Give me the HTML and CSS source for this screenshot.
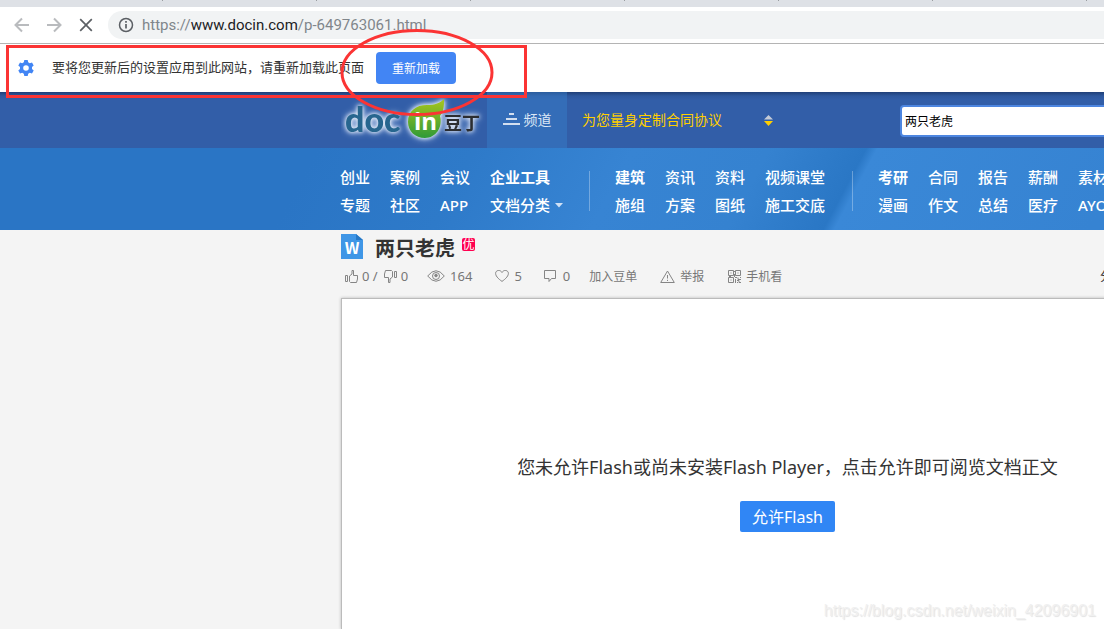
FILE: index.html
```html
<!DOCTYPE html>
<html lang="zh-CN">
<head>
<meta charset="utf-8">
<title>两只老虎</title>
<link rel="stylesheet" href="styles.css">
</head>
<body>
<div class="tabs"><i></i><i></i><i></i><i></i><i></i><i></i><i></i></div>
<div class="toolbar">
  <button class="tool" aria-label="后退"><svg width="16" height="16" viewBox="0 0 16 16" fill="none" stroke="#b9bbbe" stroke-width="2"><path d="M15 8H2M8 1.500L1.500 8L8 14.500"/></svg></button>
  <button class="tool" aria-label="前进"><svg width="16" height="16" viewBox="0 0 16 16" fill="none" stroke="#b9bbbe" stroke-width="2"><path d="M1 8H14M8 1.500L14.500 8L8 14.500"/></svg></button>
  <button class="tool" aria-label="停止"><svg width="16" height="16" viewBox="0 0 16 16" fill="none" stroke="#5b5f64" stroke-width="1.700"><path d="M2.200 2.200L13.800 13.800M13.800 2.200L2.200 13.800"/></svg></button>
  <div class="address">
    <svg width="16" height="16" viewBox="0 0 16 16" fill="none" stroke="#5b5f64"><circle cx="8" cy="8" r="6.500" stroke-width="1.500"/><path d="M8 7V11.500M8 4V5.700" stroke-width="1.700"/></svg>
    <span class="url">https://<b>www.docin.com</b>/p-649763061.html</span>
  </div>
</div>
<div class="infobar">
  <svg width="18" height="18" viewBox="0 0 18 18"><path fill="#4285f4" fill-rule="evenodd" d="M7.300 1H10.700L11.200 3.300L12.800 4.200L15 3.500L16.700 6.400L15 8V10L16.700 11.600L15 14.500L12.800 13.800L11.200 14.700L10.700 17H7.300L6.800 14.700L5.200 13.800L3 14.500L1.300 11.600L3 10V8L1.300 6.400L3 3.500L5.200 4.200L6.800 3.300ZM9 6.200A2.800 2.800 0 1 0 9 11.800A2.800 2.800 0 1 0 9 6.200Z"/></svg>
  <span class="message">要将您更新后的设置应用到此网站，请重新加载此页面</span>
  <button class="reload">重新加载</button>
</div>
<header class="header">
  <a class="logo" href="#" aria-label="豆丁">
    <svg width="146" height="56" viewBox="0 0 146 56">
      <defs>
        <linearGradient id="leaf" x1="0" y1="0" x2="0" y2="1"><stop offset="0" stop-color="#a9c61d"/><stop offset="1" stop-color="#2f9a38"/></linearGradient>
      </defs>
      <g class="glow">
        <text class="doc" x="4" y="40">doc</text>
        <path fill="url(#leaf)" d="M103 7C103 14 103 19 99 24C102 35 95 46 84 46C74 46 67 39 67 30C67 19 75 13 86 13C94 13 99 11 103 7Z"/>
        <text class="cn" x="103" y="38">豆丁</text>
      </g>
      <text class="in" x="73" y="38">in</text>
    </svg>
  </a>
  <a class="channel" href="#"><svg width="17" height="12" viewBox="0 0 17 12" fill="#d3dff0"><path d="M6 0h5v2H6zM3 5h11v2H3zM0 10h17v2H0z"/></svg>频道</a>
  <a class="promo" href="#">为您量身定制合同协议</a>
  <button class="sorter" aria-label="切换"><svg width="9" height="11" viewBox="0 0 9 11"><path fill="#c5cbd6" d="M4.500 0L9 4.500H0Z"/><path fill="#ffcf00" d="M0 6H9L4.500 11Z"/></svg></button>
  <input class="search" type="text" value="两只老虎" aria-label="搜索">
</header>
<nav class="nav">
  <div class="group">
    <a href="#">创业</a><a href="#">案例</a><a href="#">会议</a><a href="#" class="strong wide">企业工具</a>
    <a href="#">专题</a><a href="#">社区</a><a href="#">APP</a><a href="#" class="wide">文档分类<svg width="8" height="5" viewBox="0 0 8 5"><path fill="#d0e1f5" d="M0 0H8L4 4.500Z"/></svg></a>
  </div>
  <div class="group">
    <a href="#" class="strong">建筑</a><a href="#">资讯</a><a href="#">资料</a><a href="#">视频课堂</a>
    <a href="#">施组</a><a href="#">方案</a><a href="#">图纸</a><a href="#">施工交底</a>
  </div>
  <div class="group five">
    <a href="#" class="strong">考研</a><a href="#">合同</a><a href="#">报告</a><a href="#">薪酬</a><a href="#">素材</a>
    <a href="#">漫画</a><a href="#">作文</a><a href="#">总结</a><a href="#">医疗</a><a href="#">AYO</a>
  </div>
</nav>
<main class="page">
  <div class="heading">
    <svg width="22" height="25" viewBox="0 0 22 25"><path fill="#3f96e6" d="M0 0H15L22 6V25H0Z"/><path fill="#2678c6" d="M15 0L22 6H15Z"/><text class="word" x="11" y="20" text-anchor="middle">W</text></svg>
    <h1>两只老虎</h1>
    <span class="badge">优</span>
  </div>
  <div class="stats">
    <button class="votes"><svg width="13" height="13" viewBox="0 0 13 13" fill="none" stroke="#858585"><path d="M.5 5.500H2.500V11.500H.5ZM4.500 11.500V6L7 4V.5H8.500V5.500H12.500V9L11.500 12.500H5.500Z"/></svg><span>0 /</span><svg class="down" width="13" height="13" viewBox="0 0 13 13" fill="none" stroke="#858585"><path d="M10.500 1.500H12.500V7.500H10.500ZM8.500 1.500V7L6 9V12.500H4.500V7.500H.5V4L1.500 .5H7.500Z"/></svg><span>0</span></button>
    <span class="stat views"><svg width="18" height="12" viewBox="0 0 18 12" fill="none" stroke="#858585"><path d="M.7 6Q9-4.500 17.300 6Q9 16.500 .7 6Z"/><circle cx="9" cy="6" r="3.500"/><circle cx="9" cy="5.500" r="1.300" fill="#858585"/></svg>164</span>
    <button class="stat likes"><svg width="14" height="12" viewBox="0 0 14 12" fill="none" stroke="#858585"><path d="M7 2.500C5.500-.2 2-.2 .8 2.200C-.3 5.500 3.500 9 7 11.400C10.500 9 14.300 5.500 13.200 2.200C12-.2 8.500-.2 7 2.500Z"/></svg>5</button>
    <button class="stat notes"><svg width="12" height="12" viewBox="0 0 12 12" fill="none" stroke="#858585"><path d="M.5 .5H11.500V8.500H7.500L5 11.500V8.500H.5Z"/></svg>0</button>
    <button class="stat save">加入豆单</button>
    <button class="stat report"><svg width="15" height="13" viewBox="0 0 15 13" fill="none" stroke="#858585"><path d="M7.500 1L14.300 12.500H.7ZM7.500 5V8.500M7.500 9.800V11"/></svg>举报</button>
    <button class="stat phone"><svg width="13" height="13" viewBox="0 0 13 13" fill="none" stroke="#858585"><path d="M.5 .5H5.500V5.500H.5ZM7.500 .5H12.500V5.500H7.500ZM.5 7.500H5.500V12.500H.5ZM2.500 3H3.500M9.500 3H10.500M2.500 10H3.500M7 7.500H9M10 7.500V9.500H13M7.500 9V13M9 10.500H11V12.500H13M9 12.500H10M12.500 7V8M6.500 1V2M6.500 4V7M1 6.500H3"/></svg>手机看</button>
    <button class="stat share">分享</button>
  </div>
  <section class="sheet">
    <p>您未允许Flash或尚未安装Flash Player，点击允许即可阅览文档正文</p>
    <button class="allow">允许Flash</button>
  </section>
</main>
<div class="watermark">https://blog.csdn.net/weixin_42096901</div>
<svg class="marks" width="540" height="120" viewBox="0 0 540 120" fill="none" stroke="#fb3434" stroke-width="3"><path d="M7.500 46.500H525.500V96.500H7.500Z"/><ellipse cx="417" cy="72.500" rx="75" ry="42"/></svg>
</body>
</html>
```
FILE: styles.css
```css
* { box-sizing: border-box; }
body {
  margin: 0;
  min-height: 100vh;
  display: flex;
  flex-direction: column;
  position: relative;
  overflow: hidden;
  background: #f4f4f4;
  font-family: "Noto Sans", "Noto Sans CJK SC", sans-serif;
  white-space: nowrap;
}
button {
  border: 0;
  padding: 0;
  background: none;
  font: inherit;
  color: inherit;
}
a { color: inherit; text-decoration: none; }
svg { flex: none; display: block; }
.tabs {
  height: 7px;
  background: #dee1e6;
  display: flex;
  gap: 153px;
  padding-left: 162px;
}
.tabs i { flex: none; width: 1px; height: 1px; background: #9a9da1; }
.toolbar {
  height: 37px;
  background: #fff;
  border-bottom: 1px solid #b4b4b4;
  display: flex;
  align-items: center;
  gap: 16px;
  padding-left: 14px;
}
.tool { flex: none; }
.address {
  flex: 1;
  height: 28px;
  margin-left: -2px;
  padding-left: 10px;
  border-radius: 14px 0 0 14px;
  background: #f1f3f4;
  display: flex;
  align-items: center;
  gap: 8px;
}
.url { font-size: 15px; font-family: Roboto, sans-serif; color: #80868b; }
.url b { font-weight: 400; color: #202124; }
.infobar {
  height: 48px;
  background: #fff;
  display: flex;
  align-items: center;
  padding-left: 17px;
}
.message { margin: 0 12px 0 17px; padding-bottom: 4px; font-size: 13px; color: #333; }
.reload {
  width: 80px;
  height: 32px;
  border-radius: 4px;
  background: #4285f4;
  color: #fff;
  font-size: 12px;
}
.header {
  height: 56px;
  min-width: 1234px;
  padding-left: 341px;
  background: linear-gradient(#203f78, #2e589e 4px, #325ea8 8px);
  display: flex;
  align-items: center;
}
.logo { flex: none; }
.glow { filter: drop-shadow(0 0 2px #fff) drop-shadow(0 0 3px #b5cbee); }
.doc { font: 900 34px Lato, sans-serif; fill: #27668f; }
.in { font: 700 24px "Open Sans", sans-serif; fill: #fff; }
.cn { font: 700 18px "Noto Sans CJK SC", sans-serif; fill: #2b2d31; }
.channel {
  width: 80px;
  height: 56px;
  padding-bottom: 2px;
  background: rgba(55, 129, 205, .45);
  color: #dce7f6;
  font-size: 14px;
  display: flex;
  align-items: center;
  justify-content: center;
  gap: 4px;
}
.promo { margin: 0 42px 0 15px; padding-bottom: 2px; color: #ffcf00; font-size: 14px; }
.search {
  flex: 1;
  height: 32px;
  margin: 1px 0 0 127px;
  padding: 0 3px;
  border: 2px solid #4d86e0;
  border-radius: 4px;
  background: #fff;
  color: #000;
  font: 12px "Noto Sans", "Noto Sans CJK SC", sans-serif;
}
.nav {
  min-width: 1234px;
  padding: 15px 0 11px 340px;
  background:
    linear-gradient(120deg, transparent 1000px, rgba(34, 110, 190, .4) 1000px),
    linear-gradient(118deg, #2a75c5 0, #2a75c5 280px, #2e7ac9 420px, #3784d3 560px, #3582d0 680px, #2a77c5 765px, #3a88d7 775px, #3683d2 1000px);
  color: #fff;
  font-size: 15px;
  font-weight: 500;
  line-height: 28px;
  display: flex;
  align-items: center;
}
.group {
  display: grid;
  grid-template-columns: repeat(3, 30px) auto;
  column-gap: 20px;
}
.group.five { grid-template-columns: repeat(5, 30px); }
.group + .group { margin-left: 25px; padding-left: 26px; background: linear-gradient(rgba(255, 255, 255, .3), rgba(255, 255, 255, .3)) left center / 1px 40px no-repeat; }
.group + .five { margin-left: 27px; }
.group .strong { font-weight: 700; }
.group .wide { width: 74px; display: flex; align-items: center; gap: 5px; }
.page {
  flex: 1;
  min-width: 1234px;
  padding-left: 341px;
  display: flex;
  flex-direction: column;
}
.heading {
  height: 34px;
  padding-top: 4px;
  display: flex;
  align-items: flex-start;
}
.word { font: 700 16px "Noto Sans CJK SC", sans-serif; fill: #fff; }
h1 {
  margin: 0 7px 0 12px;
  font-size: 20px;
  line-height: 29px;
  color: #333;
}
.badge {
  width: 13px;
  height: 13px;
  margin-top: 4px;
  border-radius: 2px;
  background: #ff0050;
  color: #fff;
  font-size: 12px;
  line-height: 13px;
  text-align: center;
}
.stats {
  height: 34px;
  padding: 0 84px 10px 4px;
  display: flex;
  align-items: center;
  color: #777;
  font-size: 13px;
}
.votes, .stat { display: flex; align-items: center; gap: 6px; }
.votes { gap: 4px; margin-right: 19px; }
.down { margin-left: 2px; }
.views { margin-right: 23px; gap: 5px; }
.likes { margin-right: 22px; gap: 5px; }
.notes { margin-right: 19px; gap: 7px; }
.save, .report, .phone, .share { font-size: 12px; gap: 5px; }
.save { margin-right: 23px; }
.report { margin-right: 24px; }
.share { margin-left: auto; margin-right: 26px; color: #333; }
.sheet {
  flex: 1;
  border: 1px solid #bbb;
  border-bottom: 0;
  box-shadow: 0 0 3px rgba(0, 0, 0, .25);
  background: #fff;
  text-align: center;
  color: #333;
}
.sheet p { margin: 154px 0 20px; font-size: 18px; line-height: 28px; }
.allow {
  height: 31px;
  padding: 0 12px 2px;
  border-radius: 2px;
  background: #3086f5;
  color: #fff;
  font-size: 16px;
}
.watermark {
  position: absolute;
  right: 8px;
  bottom: 9px;
  font: 16px "Liberation Sans", sans-serif;
  color: #f0f0f0;
  text-shadow: 1px 1px 1px #e2e2e2;
}
.marks { position: absolute; left: 0; top: 0; pointer-events: none; }
```
